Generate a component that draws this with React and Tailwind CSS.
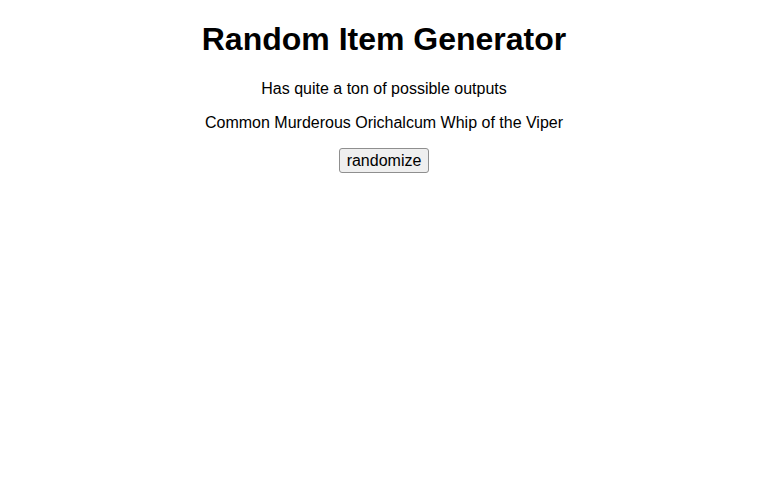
import { useState } from "react"

const rarities = ["Common", "Uncommon", "Rare", "Epic", "Legendary"]
const prefixes = ["Murderous", "Shiny", "Cursed", "Ancient", "Swift"]
const materials = ["Orichalcum", "Iron", "Mithril", "Bronze", "Obsidian"]
const items = ["Whip", "Sword", "Axe", "Bow", "Dagger"]
const suffixes = ["of the Viper", "of Doom", "of the Bear", "of Frost", "of Flames"]

const pick = (list) => list[Math.floor(Math.random() * list.length)]

export default function App() {
  const [item, setItem] = useState("Common Murderous Orichalcum Whip of the Viper")

  const randomize = () => {
    setItem(`${pick(rarities)} ${pick(prefixes)} ${pick(materials)} ${pick(items)} ${pick(suffixes)}`)
  }

  return (
    <div className="min-h-[480px] bg-white px-2 text-center text-black font-['Liberation_Sans',Arial,sans-serif] text-base">
      <div className="h-[21px]" />
      <h1 className="text-[32px] leading-[37px] font-bold">Random Item Generator</h1>
      <p className="mt-[22px] leading-[18px]">Has quite a ton of possible outputs</p>
      <p className="mt-4 leading-[18px]">{item}</p>
      <button
        onClick={randomize}
        className="mt-4 px-[7px] py-[2px] leading-[19px] text-base bg-[#efefef] border border-[#8f8f8f] rounded-[3px] hover:bg-[#e5e5e5]"
      >
        randomize
      </button>
    </div>
  )
}
